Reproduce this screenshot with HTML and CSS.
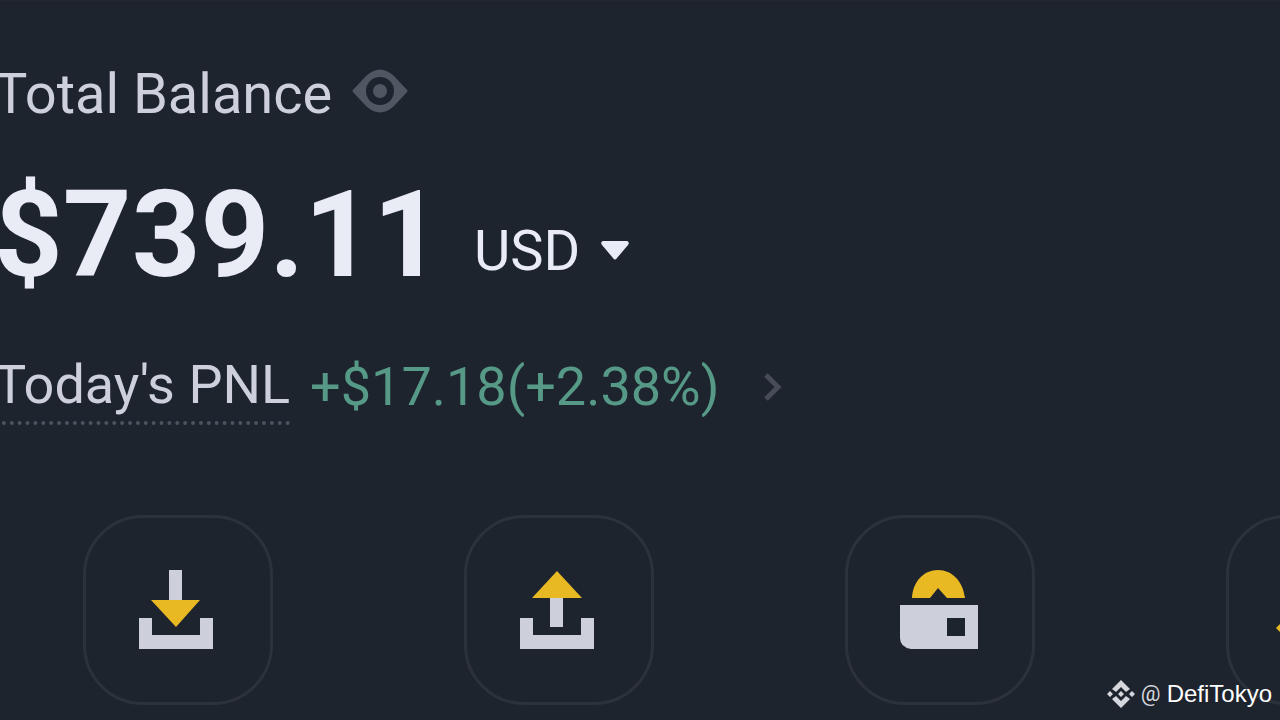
FILE: index.html
```
<!DOCTYPE html>
<html lang="en">
<head>
<meta charset="UTF-8">
<title>Total Balance</title>
<meta name="viewport" content="width=device-width, initial-scale=1">
<link rel="stylesheet" href="styles.css">
</head>
<body>
<main class="wallet">
    <section class="balance">
        <div class="balance-title">
            <h1>Total Balance</h1>
            <button type="button" class="eye-btn" aria-label="Hide balance">
                <svg width="56" height="44" viewBox="0 0 56 44">
                    <path fill="#4f5763" fill-rule="evenodd" d="M0 22 L14 7 Q28 -6 42 7 L56 22 L42 37 Q28 50 14 37 Z M28 8 A14 14 0 1 0 28 36 A14 14 0 1 0 28 8 Z"/>
                    <circle cx="28" cy="22" r="7" fill="#4f5763"/>
                </svg>
            </button>
        </div>
        <div class="amount-row">
            <span class="amount">$739.11</span>
            <label class="currency">
                <select aria-label="Currency">
                    <option>USD</option>
                </select>
                <svg width="28" height="20" viewBox="0 0 28 20">
                    <path fill="#eaecf5" d="M2 0 H26 Q29 1 27 4 L16 17 Q14 20 12 17 L1 4 Q-1 1 2 0 Z"/>
                </svg>
            </label>
        </div>
        <div class="pnl-row">
            <span class="pnl-label">Today's PNL</span>
            <span class="pnl-value">+$17.18(+2.38%)</span>
            <button type="button" class="pnl-more" aria-label="PNL details">
                <svg width="20" height="30" viewBox="0 0 20 30">
                    <path fill="none" stroke="#474c58" stroke-width="5" d="M3 3 L15 15 L3 27"/>
                </svg>
            </button>
        </div>
    </section>
    <nav class="actions">
        <button type="button" class="action" aria-label="Deposit">
            <svg width="80" height="80" viewBox="0 0 80 80">
                <path fill="#cdd0da" d="M31 0 H44 V31 H31 Z M1 48 H14 V65 H62 V48 H75 V79 H1 Z"/>
                <path fill="#e8b923" d="M13 30 H62 L38 57 Z"/>
            </svg>
        </button>
        <button type="button" class="action" aria-label="Withdraw">
            <svg width="80" height="80" viewBox="0 0 80 80">
                <path fill="#cdd0da" d="M31 26 H44 V57 H31 Z M1 48 H14 V65 H62 V48 H75 V79 H1 Z"/>
                <path fill="#e8b923" d="M13 28 H63 L38 1 Z"/>
            </svg>
        </button>
        <button type="button" class="action" aria-label="Wallet">
            <svg width="80" height="80" viewBox="0 0 80 80">
                <path fill="#e8b923" d="M12 28 C13 11 24 0 38 0 S63 11 65 28 H47 L38 18 L30 28 Z"/>
                <path fill="#cdd0da" fill-rule="evenodd" d="M0 35 H78 V79 H11 Q0 77 0 68 Z M47 48 V66 H65 V48 Z"/>
            </svg>
        </button>
        <button type="button" class="action" aria-label="Transfer">
            <svg width="90" height="80" viewBox="0 0 90 80">
                <path fill="#cdd0da" d="M6 12 H84 V28 H6 Z"/>
                <path fill="#e8b923" d="M0 58 L8 50 H84 V66 H8 Z"/>
            </svg>
        </button>
    </nav>
</main>
<footer class="credit">
    <svg width="28" height="28" viewBox="0 0 28 28">
        <path fill="#d5d7dd" d="M14 0 L23 9 L19 12 L14 7 L9 12 L5 9 Z M14 28 L23 19 L19 16 L14 21 L9 16 L5 19 Z M14 11 L17 14 L14 17 L11 14 Z M3 11 L6 14 L3 17 L0 14 Z M25 11 L28 14 L25 17 L22 14 Z"/>
    </svg>
    <span class="credit-at">@</span>
    <span class="credit-name">DefiTokyo</span>
</footer>
</body>
</html>
```
FILE: styles.css
```
* {
    box-sizing: border-box;
}
body {
    margin: 0;
    min-height: 100vh;
    overflow: hidden;
    position: relative;
    background: #1e242e;
    border-top: 1px solid #23252f;
    color: #cdd0dc;
    font-family: Roboto, "Liberation Sans", sans-serif;
}
button, select {
    margin: 0;
    padding: 0;
    border: none;
    background: none;
    color: inherit;
    font: inherit;
    cursor: pointer;
}
svg {
    display: block;
}
.wallet {
    padding-top: 60px;
}
.balance {
    margin-left: -6px;
}
.balance-title {
    display: flex;
    gap: 20px;
    height: 64px;
}
.eye-btn {
    align-self: flex-start;
    padding-top: 8px;
}
h1 {
    margin: 0;
    font-size: 56px;
    line-height: 66px;
    font-weight: 400;
}
.amount-row {
    display: flex;
    align-items: flex-end;
    gap: 32px;
    margin-top: 38px;
    color: #eaecf5;
}
.amount {
    font-size: 120px;
    line-height: 144px;
    font-weight: 700;
}
.currency {
    display: flex;
    align-items: center;
    gap: 20px;
    padding-bottom: 24px;
    font-size: 56px;
    line-height: 64px;
}
.currency select {
    appearance: none;
}
.pnl-row {
    display: flex;
    align-items: center;
    margin-top: 42px;
    font-size: 54px;
    line-height: 64px;
}
.pnl-label {
    padding: 4px 0;
    border-bottom: 4px dotted #4c525e;
}
.pnl-value {
    margin-left: 20px;
    color: #559986;
}
.pnl-more {
    margin-left: 44px;
}
.actions {
    display: flex;
    gap: 191px;
    margin-top: 90px;
    padding-left: 83px;
}
.action {
    flex: none;
    display: flex;
    align-items: center;
    justify-content: center;
    width: 190px;
    height: 190px;
    border: 3px solid #2c323c;
    border-radius: 60px;
}
.credit {
    position: absolute;
    right: 8px;
    bottom: 12px;
    display: flex;
    align-items: center;
    gap: 6px;
    font-family: "Liberation Sans", Arial, sans-serif;
    font-size: 24px;
    line-height: 28px;
    color: #fff;
}
.credit-at {
    color: #d5d7dd;
    font-family: Roboto, sans-serif;
    font-size: 22px;
}
```
